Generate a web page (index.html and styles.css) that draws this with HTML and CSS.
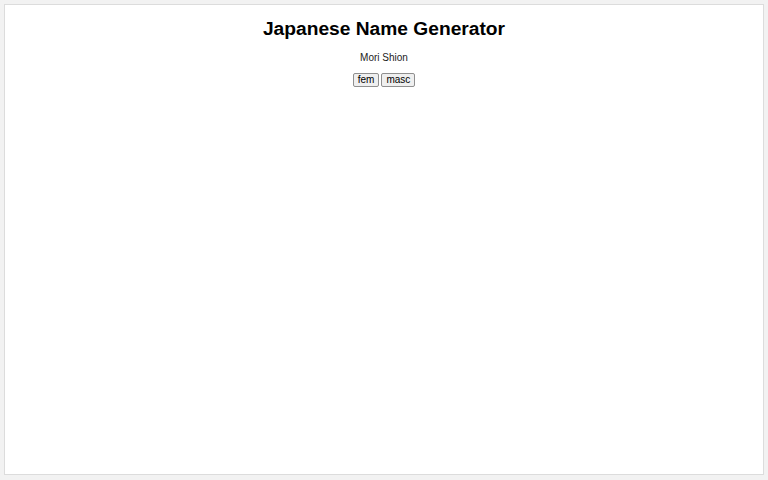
FILE: index.html
```html
<!DOCTYPE html>
<html lang="en">
  <head>
    <meta charset="UTF-8" />
    <meta name="viewport" content="width=device-width, initial-scale=1.0" />
    <title>Japanese Name Generator</title>
    <link rel="stylesheet" href="styles.css">
  </head>
  <body>
    <div class="container">
      <h1>Japanese Name Generator</h1>
      <p class="name" id="name">Mori Shion</p>
      <div class="buttons">
        <button type="button">fem</button>
        <button type="button">masc</button>
      </div>
    </div>
  </body>
</html>
```

FILE: styles.css
```css
body {
  font-family: "Liberation Sans", Arial, sans-serif;
  background: #f2f2f2;
  margin: 0;
  padding: 4px 4px 5px 4px;
  height: 480px;
  box-sizing: border-box;
}
.container {
  background: #fff;
  border: 1px solid #dcdcdc;
  height: 100%;
  box-sizing: border-box;
  text-align: center;
  padding-top: 13px;
}
h1 {
  font-size: 19.2px;
  margin: 0;
  line-height: 22px;
}
.name {
  font-size: 10px;
  color: #222;
  margin: 12px 0 9px;
  line-height: 12px;
}
.buttons {
  display: flex;
  justify-content: center;
  gap: 2px;
}
.buttons button {
  font-family: "Liberation Sans", Arial, sans-serif;
  font-size: 10px;
  height: 14px;
  line-height: 10px;
  padding: 0 4px;
  margin: 0;
  border: 1px solid #8f8f8f;
  border-radius: 2px;
  background: #efefef;
  color: #000;
}
```
